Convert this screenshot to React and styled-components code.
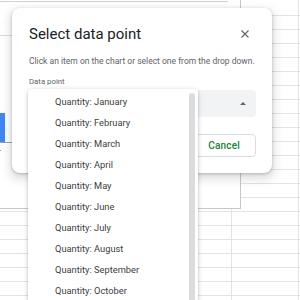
import React from 'react';
import styled, { createGlobalStyle } from 'styled-components';

const GlobalStyle = createGlobalStyle`
  html, body {
    margin: 0;
    padding: 0;
    width: 300px;
    height: 300px;
    overflow: hidden;
    background: #ffffff;
    font-family: Roboto, 'Liberation Sans', Arial, sans-serif;
    -webkit-font-smoothing: antialiased;
  }
`;

// only the items that fit in the visible part of the list
const MONTHS = [
  'January', 'February', 'March', 'April', 'May',
  'June', 'July', 'August', 'September', 'October',
];

// the spreadsheet behind the dialog
const Sheet = styled.div`
  position: relative;
  width: 300px;
  height: 300px;
  overflow: hidden;
  background-color: #ffffff;
  background-image:
    repeating-linear-gradient(to bottom, transparent 0, transparent 13px, #e3e3e3 13px, #e3e3e3 14px),
    linear-gradient(to right, transparent 231px, #e3e3e3 231px, #e3e3e3 232px, transparent 232px, transparent 298px, #e3e3e3 298px, #e3e3e3 299px, transparent 299px);
  background-position: 0 2px, 0 0;
`;

// embedded chart object sitting on the sheet
const Chart = styled.div`
  position: absolute;
  left: -2px;
  top: -2px;
  width: 242px;
  height: 210px;
  background: #ffffff;
  border-right: 1px solid #c6c6c6;
  border-bottom: 1px solid #c6c6c6;

  svg {
    display: block;
  }
`;

const Dialog = styled.div`
  position: absolute;
  left: 12px;
  top: 8px;
  width: 260px;
  box-sizing: border-box;
  padding: 14px 16px 16px 17px;
  display: flex;
  flex-direction: column;
  background: #ffffff;
  border-radius: 8px;
  box-shadow: 0 1px 3px 0 rgba(60, 64, 67, 0.3), 0 4px 8px 3px rgba(60, 64, 67, 0.15);
`;

const Header = styled.div`
  display: flex;
  align-items: center;
  justify-content: space-between;
  height: 24px;
`;

const Title = styled.h1`
  margin: 0;
  font-family: Roboto, 'Open Sans', sans-serif;
  font-weight: 400;
  font-size: 15px;
  color: #202124;
  line-height: 24px;
`;

const CloseButton = styled.button`
  display: flex;
  align-items: center;
  justify-content: center;
  width: 16px;
  height: 16px;
  margin-right: 3px;
  padding: 0;
  border: none;
  background: none;
`;

const Description = styled.p`
  margin: 9px 0 0;
  font-size: 8.5px;
  line-height: 12px;
  color: #5f6368;
  white-space: nowrap;
`;

const Label = styled.div`
  margin-top: 9px;
  font-size: 7.8px;
  line-height: 12px;
  color: #5f6368;
`;

const Field = styled.div`
  position: relative;
  margin-top: 2px;
`;

const SelectBox = styled.div`
  display: flex;
  align-items: center;
  justify-content: flex-end;
  height: 27px;
  padding-right: 10px;
  background: #f1f3f4;
  border-radius: 4px;
`;

const Caret = styled.span`
  width: 0;
  height: 0;
  border-left: 3px solid transparent;
  border-right: 3px solid transparent;
  border-bottom: 3px solid #5f6368;
`;

const Actions = styled.div`
  display: flex;
  justify-content: flex-end;
  margin-top: 17px;
`;

const CancelButton = styled.button`
  height: 23px;
  box-sizing: border-box;
  padding: 0 15px 0 17px;
  border: 1px solid #dadce0;
  border-radius: 4px;
  background: #ffffff;
  font-family: Roboto, sans-serif;
  font-size: 10px;
  font-weight: 500;
  letter-spacing: 0.2px;
  color: #188038;
`;

// open dropdown list, hanging over the select field
const Menu = styled.div`
  position: absolute;
  left: -1px;
  top: -1px;
  z-index: 2;
  width: 170px;
  height: 230px;
  display: flex;
  background: #ffffff;
  border-radius: 4px;
  box-shadow: 0 2px 2px rgba(0, 0, 0, 0.14), 0 1px 5px rgba(0, 0, 0, 0.2);
`;

const Options = styled.ul`
  flex: 1;
  margin: 0;
  padding: 2px 0 0;
  list-style: none;
`;

const Option = styled.li`
  height: 21px;
  line-height: 21px;
  padding-left: 27px;
  font-size: 9.3px;
  color: #3c4043;
  white-space: nowrap;
`;

const Scrollbar = styled.div`
  width: 6px;
  margin: 4px 3px 0 0;
  border-radius: 3px;
  background: #dadce0;
`;

function App() {
  return (
    <>
      <GlobalStyle />
      <Sheet>
        <Chart>
          <svg width="242" height="210" viewBox="0 0 242 210">
            <line x1="0" y1="3.5" x2="230" y2="3.5" stroke="#d0d0d0" />
            <line x1="0" y1="37.5" x2="240" y2="37.5" stroke="#d9d9d9" />
            <rect x="0" y="115" width="7" height="29" fill="#4285f4" />
            <line x1="0" y1="144.5" x2="240" y2="144.5" stroke="#9e9e9e" />
            <line x1="2" y1="152.5" x2="3" y2="152.5" stroke="#9e9e9e" />
          </svg>
        </Chart>

        <Dialog>
          <Header>
            <Title>Select data point</Title>
            <CloseButton aria-label="Close">
              <svg width="8" height="8" viewBox="0 0 8 8">
                <path d="M0.5 0.5 L7.5 7.5 M7.5 0.5 L0.5 7.5" stroke="#5f6368" strokeWidth="1.1" fill="none" />
              </svg>
            </CloseButton>
          </Header>
          <Description>Click an item on the chart or select one from the drop down.</Description>
          <Label>Data point</Label>
          <Field>
            <SelectBox>
              <Caret />
            </SelectBox>
            <Menu>
              <Options>
                {MONTHS.map((m) => (
                  <Option key={m}>Quantity: {m}</Option>
                ))}
              </Options>
              <Scrollbar />
            </Menu>
          </Field>
          <Actions>
            <CancelButton>Cancel</CancelButton>
          </Actions>
        </Dialog>
      </Sheet>
    </>
  );
}

export default App;
